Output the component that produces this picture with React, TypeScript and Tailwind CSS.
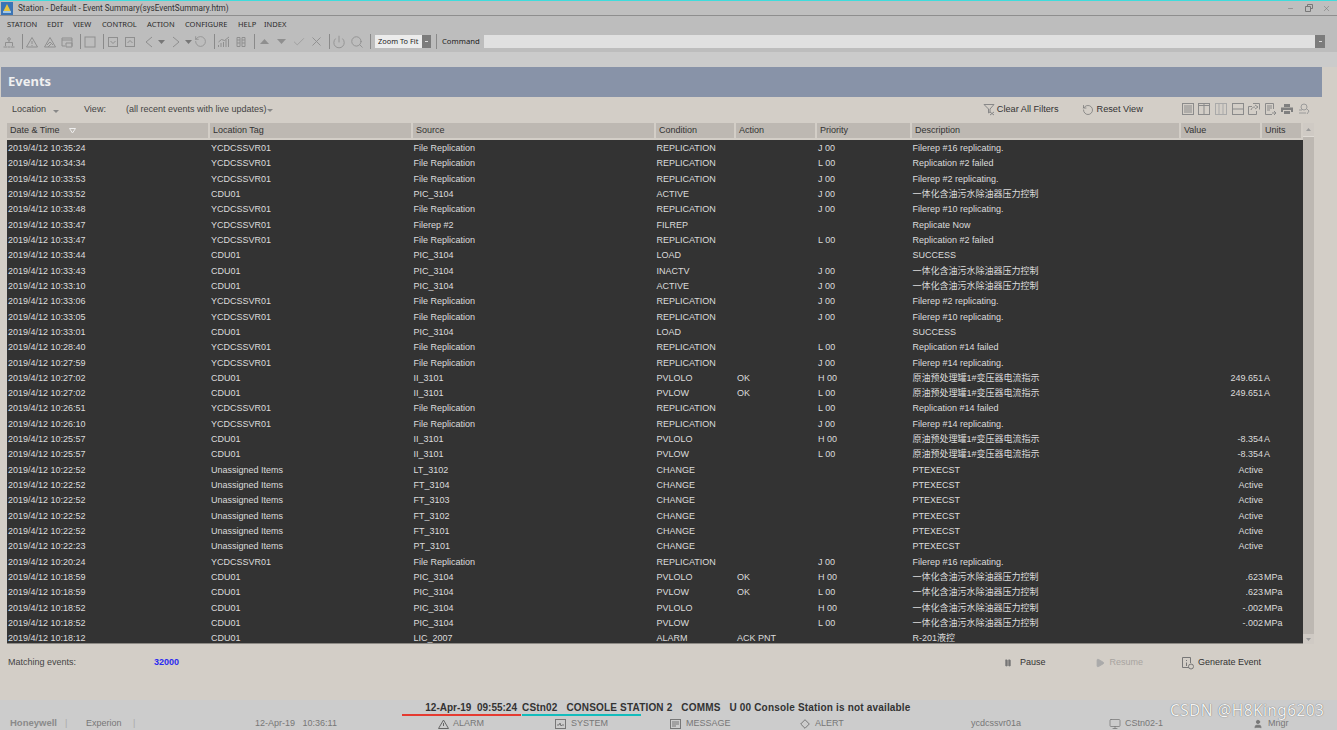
import { Pause, Play, Search, Check, X, Power, RotateCcw, Minus, User, Monitor } from 'lucide-react'

const FILE = 'File Replication'
const REPL = 'REPLICATION'
const YC = 'YCDCSSVR01'
const UN = 'Unassigned Items'
const PIC_DESC = '一体化含油污水除油器压力控制'
const II_DESC = '原油预处理罐1#变压器电流指示'

// time, tag, source, condition, action, priority, description, value, units
const rows: string[][] = [
  ['10:35:24', YC, FILE, REPL, '', 'J 00', 'Filerep #16 replicating.', '', ''],
  ['10:34:34', YC, FILE, REPL, '', 'L 00', 'Replication #2 failed', '', ''],
  ['10:33:53', YC, FILE, REPL, '', 'J 00', 'Filerep #2 replicating.', '', ''],
  ['10:33:52', 'CDU01', 'PIC_3104', 'ACTIVE', '', 'J 00', PIC_DESC, '', ''],
  ['10:33:48', YC, FILE, REPL, '', 'J 00', 'Filerep #10 replicating.', '', ''],
  ['10:33:47', YC, 'Filerep #2', 'FILREP', '', '', 'Replicate Now', '', ''],
  ['10:33:47', YC, FILE, REPL, '', 'L 00', 'Replication #2 failed', '', ''],
  ['10:33:44', 'CDU01', 'PIC_3104', 'LOAD', '', '', 'SUCCESS', '', ''],
  ['10:33:43', 'CDU01', 'PIC_3104', 'INACTV', '', 'J 00', PIC_DESC, '', ''],
  ['10:33:10', 'CDU01', 'PIC_3104', 'ACTIVE', '', 'J 00', PIC_DESC, '', ''],
  ['10:33:06', YC, FILE, REPL, '', 'J 00', 'Filerep #2 replicating.', '', ''],
  ['10:33:05', YC, FILE, REPL, '', 'J 00', 'Filerep #10 replicating.', '', ''],
  ['10:33:01', 'CDU01', 'PIC_3104', 'LOAD', '', '', 'SUCCESS', '', ''],
  ['10:28:40', YC, FILE, REPL, '', 'L 00', 'Replication #14 failed', '', ''],
  ['10:27:59', YC, FILE, REPL, '', 'J 00', 'Filerep #14 replicating.', '', ''],
  ['10:27:02', 'CDU01', 'II_3101', 'PVLOLO', 'OK', 'H 00', II_DESC, '249.651', 'A'],
  ['10:27:02', 'CDU01', 'II_3101', 'PVLOW', 'OK', 'L 00', II_DESC, '249.651', 'A'],
  ['10:26:51', YC, FILE, REPL, '', 'L 00', 'Replication #14 failed', '', ''],
  ['10:26:10', YC, FILE, REPL, '', 'J 00', 'Filerep #14 replicating.', '', ''],
  ['10:25:57', 'CDU01', 'II_3101', 'PVLOLO', '', 'H 00', II_DESC, '-8.354', 'A'],
  ['10:25:57', 'CDU01', 'II_3101', 'PVLOW', '', 'L 00', II_DESC, '-8.354', 'A'],
  ['10:22:52', UN, 'LT_3102', 'CHANGE', '', '', 'PTEXECST', 'Active', ''],
  ['10:22:52', UN, 'FT_3104', 'CHANGE', '', '', 'PTEXECST', 'Active', ''],
  ['10:22:52', UN, 'FT_3103', 'CHANGE', '', '', 'PTEXECST', 'Active', ''],
  ['10:22:52', UN, 'FT_3102', 'CHANGE', '', '', 'PTEXECST', 'Active', ''],
  ['10:22:52', UN, 'FT_3101', 'CHANGE', '', '', 'PTEXECST', 'Active', ''],
  ['10:22:23', UN, 'PT_3101', 'CHANGE', '', '', 'PTEXECST', 'Active', ''],
  ['10:20:24', YC, FILE, REPL, '', 'J 00', 'Filerep #16 replicating.', '', ''],
  ['10:18:59', 'CDU01', 'PIC_3104', 'PVLOLO', 'OK', 'H 00', PIC_DESC, '.623', 'MPa'],
  ['10:18:59', 'CDU01', 'PIC_3104', 'PVLOW', 'OK', 'L 00', PIC_DESC, '.623', 'MPa'],
  ['10:18:52', 'CDU01', 'PIC_3104', 'PVLOLO', '', 'H 00', PIC_DESC, '-.002', 'MPa'],
  ['10:18:52', 'CDU01', 'PIC_3104', 'PVLOW', '', 'L 00', PIC_DESC, '-.002', 'MPa'],
  ['10:18:12', 'CDU01', 'LIC_2007', 'ALARM', 'ACK PNT', '', 'R-201液控', '', ''],
]

const Sep = () => <div className="w-px h-[15px] bg-[#8a8a8a] shrink-0" />

const Glyph = ({ w = 14, children }: { w?: number; children: React.ReactNode }) => (
  <svg width={w} height="14" viewBox={`0 0 ${w} 14`} fill="none" stroke="#8f8f8f" strokeWidth="1" className="shrink-0">
    {children}
  </svg>
)

const Caret = () => (
  <svg width="7" height="4" viewBox="0 0 7 4" className="shrink-0"><path d="M0 0h7L3.5 4z" fill="#777" /></svg>
)

const Toolbar = () => (
  <div className="h-[19px] flex items-center pl-[2px] pb-[2px] bg-[#bdbdbd]">
    <Glyph><circle cx="7" cy="4" r="1.3" /><path d="M7 5.5v2M3.5 11V7.5h7V11M1.5 12h3.5M5.5 12h3M9 12h3.5" /></Glyph>
    <div className="ml-[6px]"><Sep /></div>
    <div className="ml-[2px]"><Glyph><path d="M7 2.5L12.5 12h-11zM7 6v3M7 10v1" /></Glyph></div>
    <div className="ml-[4px]"><Glyph><path d="M7 2.5L12.5 12h-11zM4 10l3-3 3 3M5 12l4-4" /></Glyph></div>
    <div className="ml-[2px]"><Glyph w={16}><path d="M3 3h10v8M3 3v8h3M3 5h10M7 8h6v4H7z" /></Glyph></div>
    <div className="ml-[5px]"><Sep /></div>
    <div className="ml-[3px]"><Glyph w={12}><rect x="1" y="2" width="10" height="10" /></Glyph></div>
    <div className="ml-[7px]"><Sep /></div>
    <div className="ml-[2px]"><Glyph><rect x="2.5" y="2.5" width="9" height="9" /><path d="M4.5 6L7 8.5 9.5 6" /></Glyph></div>
    <div className="ml-[3px]"><Glyph><rect x="2.5" y="2.5" width="9" height="9" /><path d="M4.5 8L7 5.5 9.5 8" /></Glyph></div>
    <div className="ml-[6px]"><Glyph w={12}><path d="M9 2L3 7l6 5" /></Glyph></div>
    <div className="ml-[3px]"><Caret /></div>
    <div className="ml-[5px]"><Glyph w={12}><path d="M3 2l6 5-6 5" /></Glyph></div>
    <div className="ml-[3px]"><Caret /></div>
    <div className="ml-[2px]"><RotateCcw size={13} color="#8f8f8f" strokeWidth={1.5} /></div>
    <div className="ml-[7px]"><Sep /></div>
    <div className="ml-[2px]"><Glyph><path d="M1.5 12v-2M4 12V8M6.5 12V7M9 12V5M11.5 12V4M1.5 7l3-2.5 3 1L12 2" /></Glyph></div>
    <div className="ml-[4px]"><Glyph w={12}><path d="M2 2.5h3v9H2zM7 2.5h3v9H7zM2 5h3M2 8h3M7 5h3M7 8h3" /></Glyph></div>
    <div className="ml-[7px]"><Sep /></div>
    <div className="ml-[5px]"><svg width="9" height="5" viewBox="0 0 9 5" className="block"><path d="M0 5h9L4.5 0z" fill="#8f8f8f" /></svg></div>
    <div className="ml-[8px]"><svg width="9" height="5" viewBox="0 0 9 5" className="block"><path d="M0 0h9L4.5 5z" fill="#8f8f8f" /></svg></div>
    <div className="ml-[6px]"><Check size={14} color="#9c9c9c" strokeWidth={1.5} /></div>
    <div className="ml-[3px]"><X size={15} color="#8f8f8f" strokeWidth={1.5} /></div>
    <div className="ml-[5px]"><Sep /></div>
    <div className="ml-[2px]"><Power size={14} color="#8f8f8f" strokeWidth={1.5} /></div>
    <div className="ml-[4px]"><Search size={14} color="#8f8f8f" strokeWidth={1.5} /></div>
    <div className="ml-[6px]"><Sep /></div>
    <div className="ml-[4px] h-[13px] w-[47px] bg-[#ececec] flex items-center pl-[3px] text-[7.4px] text-[#222] font-['Noto_Sans',sans-serif] whitespace-nowrap">
      Zoom To Fit
    </div>
    <div className="h-[13px] w-[9px] bg-[#7c7c7c] flex items-center justify-center">
      <span className="block w-[3px] h-px bg-[#ddd]" />
    </div>
    <div className="ml-[5px]"><Sep /></div>
    <span className="ml-[5px] w-[42px] text-[7.7px] text-[#222] font-['Noto_Sans',sans-serif]">Command</span>
    <div className="h-[13px] w-[831px] bg-[#e0e0e0]" />
    <div className="h-[13px] w-[10px] bg-[#7c7c7c] flex items-center justify-center">
      <span className="block w-[3px] h-px bg-[#ddd]" />
    </div>
  </div>
)

const ViewIcons = () => (
  <div className="flex items-center gap-[4.6px] ml-[39px] mt-[-1px]">
    <svg width="12" height="12" viewBox="0 0 12 12" fill="none" stroke="#8b8b8b"><rect x=".5" y=".5" width="11" height="11" /><path d="M2 3h8M2 5h8M2 7h8M2 9h8" /></svg>
    <svg width="12" height="12" viewBox="0 0 12 12" fill="none" stroke="#8b8b8b"><rect x=".5" y=".5" width="11" height="11" /><path d="M1 2.5h10M6 1v10" /></svg>
    <svg width="12" height="12" viewBox="0 0 12 12" fill="none" stroke="#a9a9a9"><rect x=".5" y=".5" width="11" height="11" /><path d="M4 1v10M8 1v10" /></svg>
    <svg width="12" height="12" viewBox="0 0 12 12" fill="none" stroke="#8b8b8b"><rect x=".5" y=".5" width="11" height="11" /><path d="M1 6h10" /></svg>
    <svg width="12" height="12" viewBox="0 0 12 12" fill="none" stroke="#8b8b8b"><path d="M4 3.5H.5v8h8V8M3 7c.5-2 2-3 4-3M7 2l3 2-3 2M5 .5h6.5v6" /></svg>
    <svg width="12" height="12" viewBox="0 0 12 12" fill="none" stroke="#8b8b8b"><path d="M7 11.5H.5V.5h8V6M2 3h5M2 5h5M2 7h3M7 10h4M9 8l2 2-2 2" /></svg>
    <svg width="12" height="12" viewBox="0 0 12 12" fill="#7f7f7f"><path d="M3 1h6v3H3zM0 4.5h12V9h-2V7H2v2H0zM3 8h6v3H3z" /></svg>
    <svg width="12" height="12" viewBox="0 0 12 12" fill="none" stroke="#9a9a9a"><circle cx="6" cy="4" r="3" /><path d="M1 7h3M1 10h7M9 6l2 2-2 3" /></svg>
  </div>
)

const Header = ({ w, label, children }: { w: string; label: string; children?: React.ReactNode }) => (
  <div className={`${w} h-full bg-[#bdb8b2] border-r-2 border-[#d3cec7] flex items-center pl-[3px] pt-px gap-[9px]`}>
    <span>{label}</span>
    {children}
  </div>
)

const Row = ({ r }: { r: string[] }) => (
  <div className="h-[15.33px] flex items-center text-[9px] text-[#dcdcdc] whitespace-nowrap">
    <div className="w-[203px] pl-px">2019/4/12 {r[0]}</div>
    <div className="w-[202.5px] pl-[1px]">{r[1]}</div>
    <div className="w-[243px] pl-[1px]">{r[2]}</div>
    <div className="w-[80.5px] pl-[1px]">{r[3]}</div>
    <div className="w-[81px] pl-[1px]">{r[4]}</div>
    <div className="w-[94.5px] pl-[1px]">{r[5]}</div>
    <div className="w-[266px] pl-[1px]">{r[6]}</div>
    <div className="w-[85.5px] text-right">{r[7]}</div>
    <div className="pl-[1px]">{r[8]}</div>
  </div>
)

export default function App() {
  return (
    <div className="relative w-[1337px] h-[730px] overflow-hidden bg-[#d3cec7] font-['Liberation_Sans','Noto_Sans_CJK_SC',sans-serif] text-[#333]">
      <div className="h-px bg-[#3fdcdc]" />
      {/* title bar */}
      <div className="h-[15px] bg-[#bfbfbf] flex items-center border-b border-[#8e8e8e] pr-[6px]">
        <svg width="12" height="13" viewBox="0 0 12 13" className="ml-[1px] shrink-0">
          <rect width="12" height="13" fill="#3a74b5" />
          <path d="M6 2L9.5 9h-7z" fill="#e8c33c" />
          <rect x="2" y="9" width="8" height="2" fill="#9fc6e8" />
        </svg>
        <span className="ml-[5px] text-[8.2px] text-[#333] font-['Roboto',sans-serif] whitespace-nowrap">
          Station - Default - Event Summary(sysEventSummary.htm)
        </span>
        <div className="ml-auto flex items-center">
          <Minus size={7} color="#777" strokeWidth={2} />
          <svg width="8" height="8" viewBox="0 0 8 8" fill="none" stroke="#777" className="ml-[11px]"><path d="M2.5 2V.5h5v4H6M.5 2.5h5v5h-5z" /></svg>
          <X size={9} color="#777" strokeWidth={1.5} className="ml-[9px]" />
        </div>
      </div>
      {/* menu */}
      <div className="h-[17px] bg-[#bdbdbd] flex items-center pl-[7px] text-[7.5px] text-[#2b2b2b] font-['Noto_Sans',sans-serif]">
        <span className="w-[40px]">STATION</span>
        <span className="w-[26px]">EDIT</span>
        <span className="w-[29px]">VIEW</span>
        <span className="w-[45px]">CONTROL</span>
        <span className="w-[38px]">ACTION</span>
        <span className="w-[53px]">CONFIGURE</span>
        <span className="w-[26px]">HELP</span>
        <span>INDEX</span>
      </div>
      <Toolbar />
      <div className="h-[15px] bg-[#cbcbcb]" />
      <div className="ml-px w-[1321px] h-[30px] bg-[#8893a8] flex items-center pl-[7px] text-[13px] font-bold text-[#f0f0f0] font-['Noto_Sans',sans-serif]">
        Events
      </div>

      {/* filter row */}
      <div className="h-[26px] flex items-center text-[9px] text-[#444] pl-[12px]">
        <span>Location</span>
        <div className="ml-[7px] mt-[3px]"><svg width="6" height="3" viewBox="0 0 6 3" className="block"><path d="M0 0h6L3 3z" fill="#888" /></svg></div>
        <span className="ml-[25px]">View:</span>
        <span className="ml-[20px]">(all recent events with live updates)</span>
        <div className="ml-[1px]"><svg width="6" height="3" viewBox="0 0 6 3" className="block"><path d="M0 0h6L3 3z" fill="#888" /></svg></div>
        <div className="ml-auto flex items-center text-[9.2px]">
          <svg width="13" height="13" viewBox="0 0 13 13" fill="none" stroke="#888"><path d="M1 1.5h10L7 6v3L5.5 10V6z" /><path d="M7 9l4 3M11 9l-4 3" /></svg>
          <span className="ml-px text-[#333]">Clear All Filters</span>
          <div className="ml-[23px]"><RotateCcw size={12} color="#777" strokeWidth={1.5} /></div>
          <span className="ml-[3px] text-[#333]">Reset View</span>
          <ViewIcons />
          <div className="w-[27px]" />
        </div>
      </div>

      {/* table */}
      <div className="ml-[7px] w-[1307px] flex">
        <div className="w-[1296px]">
          <div className="h-[15px] flex text-[9px] text-[#333] mb-[2px]">
            <Header w="w-[203px]" label="Date & Time">
              <svg width="7" height="6" viewBox="0 0 7 6" fill="none" stroke="#eee"><path d="M.5.5h6L3.5 5z" /></svg>
            </Header>
            <Header w="w-[203px]" label="Location Tag" />
            <Header w="w-[243px]" label="Source" />
            <Header w="w-[80px]" label="Condition" />
            <Header w="w-[81px]" label="Action" />
            <Header w="w-[95px]" label="Priority" />
            <Header w="w-[269px]" label="Description" />
            <Header w="w-[81px]" label="Value" />
            <Header w="w-[41px]" label="Units" />
          </div>
          <div className="bg-[#333333] h-[504px] pt-px border-b border-[#8d8a85] overflow-hidden">
            {rows.map((r, i) => <Row key={i} r={r} />)}
          </div>
        </div>
        {/* scrollbar */}
        <div className="w-[11px] h-[521px] bg-[#bdb8b2] flex flex-col justify-between">
          <div className="h-[14px] bg-[#cfcac4] flex items-center justify-center border-b border-[#e0dcd6]">
            <svg width="5" height="3" viewBox="0 0 5 3"><path d="M0 3h5L2.5 0z" fill="#999" /></svg>
          </div>
          <div className="h-[10px] bg-[#cfcac4] flex items-center justify-center">
            <svg width="5" height="3" viewBox="0 0 5 3"><path d="M0 0h5L2.5 3z" fill="#999" /></svg>
          </div>
        </div>
      </div>

      {/* bottom actions */}
      <div className="h-[38px] flex items-center text-[9px] pl-[8px] mb-[18px]">
        <span className="w-[146px] text-[#444]">Matching events:</span>
        <span className="font-bold text-[#2a2af0]">32000</span>
        <div className="ml-[825px] flex items-center">
          <Pause size={8} fill="#777" color="#777" />
          <span className="ml-[8px] text-[#333]">Pause</span>
          <Play size={10} fill="#aaa" color="#aaa" className="ml-[49px]" />
          <span className="ml-[5px] text-[#a8a4a0]">Resume</span>
          <svg width="12" height="13" viewBox="0 0 12 13" fill="none" stroke="#777" className="ml-[39px]">
            <path d="M7 10.5H.5V.5h8V6M4.5 3v1M4.5 5.5V9" /><circle cx="9" cy="9.5" r="2.5" />
          </svg>
          <span className="ml-[4px] text-[#333]">Generate Event</span>
        </div>
      </div>

      {/* status bar */}
      <div className="h-[30px] bg-[#cccccc]">
        <div className="h-[16px] flex items-end">
          <div className="ml-[402px] w-[119px] h-[16px] border-b-2 border-[#e53a30] flex justify-end items-center">
            <span className="text-[10px] font-bold text-[#333] whitespace-nowrap pr-[4px]">12-Apr-19&nbsp;&nbsp;09:55:24</span>
          </div>
          <div className="ml-px w-[119px] h-[16px] border-b-2 border-[#12bcbc] flex items-center">
            <span className="text-[10px] tracking-[0.18px] font-bold text-[#333] whitespace-nowrap">CStn02&nbsp;&nbsp;&nbsp;CONSOLE STATION 2&nbsp;&nbsp;&nbsp;COMMS&nbsp;&nbsp;&nbsp;U 00 Console Station is not available</span>
          </div>
        </div>
        <div className="h-[14px] flex items-center pt-px text-[9px] text-[#777] whitespace-nowrap pl-[10px]">
          <span className="w-[55px] text-[9.5px] font-bold text-[#8a8a8a]">Honeywell</span>
          <span className="w-[21px] text-[#aaa]">|</span>
          <span className="w-[47px]">Experion</span>
          <span className="w-[122px] text-[#aaa]">|</span>
          <span className="w-[183px]">12-Apr-19&nbsp;&nbsp;&nbsp;10:36:11</span>
          <svg width="11" height="10" viewBox="0 0 11 10" fill="none" stroke="#666" className="shrink-0"><path d="M5.5 1L10.5 9.5H.5zM5.5 4v3" /></svg>
          <span className="ml-[4px] w-[102px]">ALARM</span>
          <svg width="11" height="10" viewBox="0 0 11 10" fill="none" stroke="#777" className="shrink-0"><rect x=".5" y=".5" width="10" height="9" /><path d="M2 6h2l1-2 1 3 1-1h2" /></svg>
          <span className="ml-[5px] w-[99px]">SYSTEM</span>
          <svg width="11" height="10" viewBox="0 0 11 10" fill="none" stroke="#777" className="shrink-0"><rect x=".5" y=".5" width="10" height="9" /><path d="M2 3h7M2 5h7M2 7h4" /></svg>
          <span className="ml-[5px] w-[114px]">MESSAGE</span>
          <svg width="10" height="10" viewBox="0 0 10 10" fill="none" stroke="#777" className="shrink-0"><path d="M5 .7L9.3 5 5 9.3.7 5z" /></svg>
          <span className="ml-[5px] w-[156px]">ALERT</span>
          <span className="w-[138px]">ycdcssvr01a</span>
          <Monitor size={12} color="#777" strokeWidth={1.5} />
          <span className="ml-[4px] w-[128px]">CStn02-1</span>
          <User size={10} fill="#777" color="#777" />
          <span className="ml-[5px]">Mngr</span>
        </div>
      </div>

      {/* watermark */}
      <div className="absolute left-[1170px] top-[699px] text-[15.5px] leading-[22px] tracking-[0.4px] font-['Noto_Sans',sans-serif] text-[#f2f2f2] [text-shadow:0_0_1px_#444] whitespace-nowrap">
        CSDN @H8King6203
      </div>
    </div>
  )
}
